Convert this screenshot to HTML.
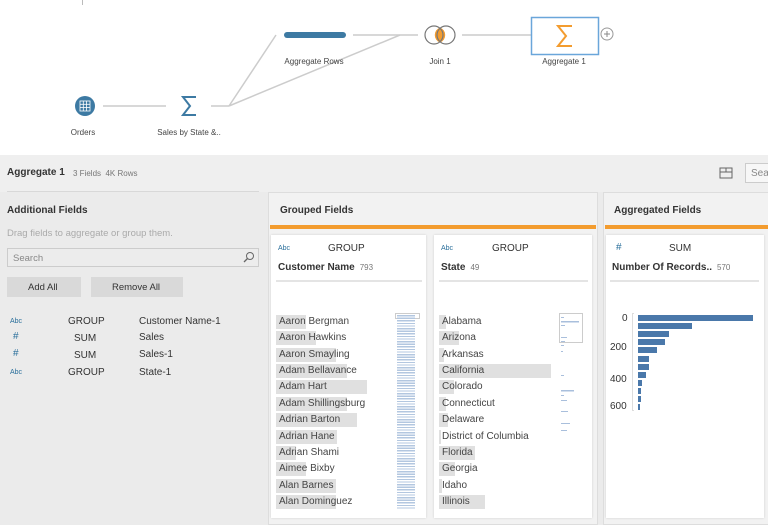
<!DOCTYPE html>
<html><head><meta charset="utf-8"><style>
*{margin:0;padding:0;box-sizing:border-box}
body{width:768px;height:525px;overflow:hidden;background:#ebebeb;font-family:"Liberation Sans",sans-serif;color:#333;position:relative}
.a{position:absolute}
.t{position:absolute;font-size:10px;white-space:nowrap}
.lbl{position:absolute;font-size:8px;color:#444;white-space:nowrap;transform:translateX(-50%)}
.hl{position:absolute;height:14px;background:#e0e0e0}
.nm{position:absolute;font-size:10px;color:#444;white-space:nowrap}
.card{position:absolute;background:#fff;box-shadow:0 0 2px #ccc}
.abc{font-size:7px;color:#2a6f9b;position:absolute}
</style></head><body>
<div class="a" style="left:0;top:0;width:768px;height:155px;background:#fff"></div>
<div class="a" style="left:82px;top:0;width:1px;height:5px;background:#bbb"></div>
<svg class="a" style="left:0;top:0" width="768" height="155">
<g stroke="#ccc" stroke-width="1.5" fill="none">
<line x1="103" y1="106" x2="166" y2="106"/>
<line x1="211" y1="106" x2="229" y2="106"/>
<line x1="229" y1="106" x2="276" y2="35"/>
<line x1="229" y1="106" x2="400" y2="35"/>
<line x1="353" y1="35" x2="418" y2="35"/>
<line x1="462" y1="35" x2="531" y2="35"/>
</g>
<circle cx="85" cy="106" r="10" fill="#3d7aa3"/>
<g stroke="#fff" stroke-width="0.8" fill="none"><rect x="80" y="101" width="10" height="10"/><line x1="80" y1="104.3" x2="90" y2="104.3"/><line x1="80" y1="107.6" x2="90" y2="107.6"/><line x1="83.3" y1="101" x2="83.3" y2="111"/><line x1="86.6" y1="101" x2="86.6" y2="111"/></g>
<path d="M196 97 L183 97 L190 106 L183 115 L196 115" stroke="#3d7aa3" stroke-width="2" fill="none"/>
<rect x="284" y="32" width="62" height="6" rx="3" fill="#3d7aa3"/>
<path d="M440 27.5 A8 8 0 0 1 440 42.5 A8 8 0 0 1 440 27.5Z" fill="#f39c2f"/>
<circle cx="434" cy="35" r="9" stroke="#777" stroke-width="1.2" fill="none"/>
<circle cx="446" cy="35" r="9" stroke="#777" stroke-width="1.2" fill="none"/>
<rect x="531.5" y="17.5" width="67" height="37" fill="#fff" stroke="#6aa6da" stroke-width="1.5"/>
<path d="M572 26 L558 26 L566 36 L558 46 L572 46" stroke="#f39c2f" stroke-width="2" fill="none"/>
<circle cx="607" cy="34" r="6" stroke="#999" fill="#fff"/>
<line x1="604" y1="34" x2="610" y2="34" stroke="#888"/><line x1="607" y1="31" x2="607" y2="37" stroke="#888"/>
</svg>
<div class="lbl" style="left:314px;top:57px">Aggregate Rows</div>
<div class="lbl" style="left:440px;top:57px">Join 1</div>
<div class="lbl" style="left:564px;top:57px">Aggregate 1</div>
<div class="lbl" style="left:83px;top:128px">Orders</div>
<div class="lbl" style="left:189px;top:128px">Sales by State &amp;..</div>
<div class="a" style="left:0;top:155px;width:768px;height:37px;background:#efefef"></div>
<div class="t" style="left:7px;top:167px;font-weight:bold;font-size:10px">Aggregate 1</div>
<div class="t" style="left:73px;top:169px;font-size:8px;color:#777">3 Fields &nbsp;4K Rows</div>
<svg class="a" style="left:719px;top:167px" width="14" height="12"><rect x="1" y="1" width="12" height="10" fill="none" stroke="#666"/><line x1="1" y1="5" x2="13" y2="5" stroke="#666"/><line x1="7" y1="1" x2="7" y2="5" stroke="#666"/></svg>
<div class="a" style="left:745px;top:163px;width:30px;height:20px;border:1px solid #ccc;background:#f7f7f7"></div>
<div class="t" style="left:751px;top:168px;color:#888">Sea</div>
<div class="a" style="left:7px;top:191px;width:252px;height:1px;background:#d8d8d8"></div>
<div class="t" style="left:7px;top:205px;font-weight:bold;font-size:10px">Additional Fields</div>
<div class="t" style="left:7px;top:228px;color:#aaa;font-size:9.5px">Drag fields to aggregate or group them.</div>
<div class="a" style="left:7px;top:248px;width:252px;height:19px;border:1px solid #ccc;background:#ececec"></div>
<div class="t" style="left:13px;top:253px;color:#888;font-size:9.5px">Search</div>
<svg class="a" style="left:243px;top:251px" width="12" height="12"><circle cx="7" cy="5" r="3.5" stroke="#666" fill="none"/><line x1="4.5" y1="7.5" x2="1" y2="11" stroke="#666" stroke-width="1.3"/></svg>
<div class="a" style="left:7px;top:277px;width:74px;height:20px;background:#d9d9d9"></div>
<div class="t" style="left:28px;top:282px;font-size:9.5px">Add All</div>
<div class="a" style="left:91px;top:277px;width:92px;height:20px;background:#d9d9d9"></div>
<div class="t" style="left:112px;top:282px;font-size:9.5px">Remove All</div>
<div class="abc" style="left:10px;top:318px">Abc</div><div class="t" style="left:68px;top:316px">GROUP</div><div class="t" style="left:139px;top:316px">Customer Name-1</div>
<div class="t" style="left:13px;top:331px;color:#2a6f9b">#</div><div class="t" style="left:74px;top:333px">SUM</div><div class="t" style="left:139px;top:332px">Sales</div>
<div class="t" style="left:13px;top:348px;color:#2a6f9b">#</div><div class="t" style="left:74px;top:350px">SUM</div><div class="t" style="left:139px;top:349px">Sales-1</div>
<div class="abc" style="left:10px;top:369px">Abc</div><div class="t" style="left:68px;top:367px">GROUP</div><div class="t" style="left:139px;top:367px">State-1</div>
<div class="a" style="left:268px;top:192px;width:330px;height:333px;background:#f2f2f2;border:1px solid #ddd"></div>
<div class="t" style="left:280px;top:205px;font-weight:bold">Grouped Fields</div>
<div class="a" style="left:270px;top:225px;width:326px;height:4px;background:#f39c2f"></div>
<div class="card" style="left:271px;top:235px;width:155px;height:283px"></div>
<div class="card" style="left:434px;top:235px;width:158px;height:283px"></div>
<div class="abc" style="left:278px;top:245px">Abc</div><div class="t" style="left:328px;top:243px">GROUP</div>
<div class="t" style="left:278px;top:262px;font-weight:bold">Customer Name <span style="font-weight:normal;font-size:8px;color:#777">&nbsp;793</span></div>
<div class="a" style="left:276px;top:280px;width:146px;height:2px;background:#e4e4e4"></div>
<div class="abc" style="left:441px;top:245px">Abc</div><div class="t" style="left:492px;top:243px">GROUP</div>
<div class="t" style="left:441px;top:262px;font-weight:bold">State <span style="font-weight:normal;font-size:8px;color:#777">&nbsp;49</span></div>
<div class="a" style="left:439px;top:280px;width:149px;height:2px;background:#e4e4e4"></div>
<div class="hl" style="left:276px;top:315px;width:30px"></div><div class="nm" style="left:279px;top:316px">Aaron Bergman</div>
<div class="hl" style="left:276px;top:331px;width:40px"></div><div class="nm" style="left:279px;top:332px">Aaron Hawkins</div>
<div class="hl" style="left:276px;top:348px;width:60px"></div><div class="nm" style="left:279px;top:349px">Aaron Smayling</div>
<div class="hl" style="left:276px;top:364px;width:71px"></div><div class="nm" style="left:279px;top:365px">Adam Bellavance</div>
<div class="hl" style="left:276px;top:380px;width:91px"></div><div class="nm" style="left:279px;top:381px">Adam Hart</div>
<div class="hl" style="left:276px;top:397px;width:71px"></div><div class="nm" style="left:279px;top:398px">Adam Shillingsburg</div>
<div class="hl" style="left:276px;top:413px;width:81px"></div><div class="nm" style="left:279px;top:414px">Adrian Barton</div>
<div class="hl" style="left:276px;top:430px;width:61px"></div><div class="nm" style="left:279px;top:431px">Adrian Hane</div>
<div class="hl" style="left:276px;top:446px;width:20px"></div><div class="nm" style="left:279px;top:447px">Adrian Shami</div>
<div class="hl" style="left:276px;top:462px;width:30px"></div><div class="nm" style="left:279px;top:463px">Aimee Bixby</div>
<div class="hl" style="left:276px;top:479px;width:60px"></div><div class="nm" style="left:279px;top:480px">Alan Barnes</div>
<div class="hl" style="left:276px;top:495px;width:60px"></div><div class="nm" style="left:279px;top:496px">Alan Dominguez</div>
<div class="a" style="left:395px;top:313px;width:25px;height:6px;border:1px solid #ccc"></div>
<div class="a" style="left:397px;top:315px;width:18px;height:195px;background:repeating-linear-gradient(#b3c7e0 0 1.3px,transparent 1.3px 2.6px)"></div>
<div class="hl" style="left:439px;top:315px;width:7px"></div><div class="nm" style="left:442px;top:316px">Alabama</div>
<div class="hl" style="left:439px;top:331px;width:20px"></div><div class="nm" style="left:442px;top:332px">Arizona</div>
<div class="hl" style="left:439px;top:348px;width:5px"></div><div class="nm" style="left:442px;top:349px">Arkansas</div>
<div class="hl" style="left:439px;top:364px;width:112px"></div><div class="nm" style="left:442px;top:365px">California</div>
<div class="hl" style="left:439px;top:380px;width:15px"></div><div class="nm" style="left:442px;top:381px">Colorado</div>
<div class="hl" style="left:439px;top:397px;width:7px"></div><div class="nm" style="left:442px;top:398px">Connecticut</div>
<div class="hl" style="left:439px;top:413px;width:9px"></div><div class="nm" style="left:442px;top:414px">Delaware</div>
<div class="hl" style="left:439px;top:430px;width:2px"></div><div class="nm" style="left:442px;top:431px">District of Columbia</div>
<div class="hl" style="left:439px;top:446px;width:36px"></div><div class="nm" style="left:442px;top:447px">Florida</div>
<div class="hl" style="left:439px;top:462px;width:16px"></div><div class="nm" style="left:442px;top:463px">Georgia</div>
<div class="hl" style="left:439px;top:479px;width:3px"></div><div class="nm" style="left:442px;top:480px">Idaho</div>
<div class="hl" style="left:439px;top:495px;width:46px"></div><div class="nm" style="left:442px;top:496px">Illinois</div>
<div class="a" style="left:559px;top:313px;width:24px;height:30px;border:1px solid #ccc"></div>
<svg class="a" style="left:561px;top:315px" width="20" height="120" fill="#a9bfdc">
<rect x="0" y="2" width="3" height="1"/><rect x="0" y="6" width="18" height="1.5"/><rect x="0" y="10" width="4" height="1"/><rect x="0" y="22" width="6" height="1"/><rect x="0" y="26" width="4" height="1"/><rect x="0" y="30" width="3" height="1"/><rect x="0" y="36" width="2" height="1"/><rect x="0" y="60" width="3" height="1"/><rect x="0" y="75" width="13" height="1.5"/><rect x="0" y="80" width="3" height="1"/><rect x="0" y="85" width="6" height="1"/><rect x="0" y="96" width="7" height="1"/><rect x="0" y="108" width="9" height="1"/><rect x="0" y="115" width="6" height="1"/>
</svg>
<div class="a" style="left:603px;top:192px;width:170px;height:333px;background:#f2f2f2;border:1px solid #ddd"></div>
<div class="t" style="left:614px;top:205px;font-weight:bold">Aggregated Fields</div>
<div class="a" style="left:605px;top:225px;width:163px;height:4px;background:#f39c2f"></div>
<div class="card" style="left:606px;top:235px;width:158px;height:283px"></div>
<div class="t" style="left:616px;top:242px;color:#2a6f9b">#</div><div class="t" style="left:669px;top:243px">SUM</div>
<div class="t" style="left:612px;top:262px;font-weight:bold">Number Of Records.. <span style="font-weight:normal;font-size:8px;color:#777">&nbsp;570</span></div>
<div class="a" style="left:610px;top:280px;width:149px;height:2px;background:#e4e4e4"></div>
<div class="t" style="left:622px;top:313px">0</div>
<div class="t" style="left:610px;top:342px">200</div>
<div class="t" style="left:610px;top:374px">400</div>
<div class="t" style="left:610px;top:401px">600</div>
<div class="a" style="left:632px;top:313px;width:2px;height:98px;border:1px solid #ddd;border-right:none"></div>
<svg class="a" style="left:638px;top:315px" width="120" height="100" fill="#4a78aa">
<rect x="0" y="0" width="115" height="6"/><rect x="0" y="8" width="54" height="6"/><rect x="0" y="16" width="31" height="6"/><rect x="0" y="24" width="27" height="6"/><rect x="0" y="32" width="19" height="6"/><rect x="0" y="41" width="11" height="6"/><rect x="0" y="49" width="11" height="6"/><rect x="0" y="57" width="8" height="6"/><rect x="0" y="65" width="4" height="6"/><rect x="0" y="73" width="3" height="6"/><rect x="0" y="81" width="3" height="6"/><rect x="0" y="89" width="2" height="6"/>
</svg>
</body></html>
